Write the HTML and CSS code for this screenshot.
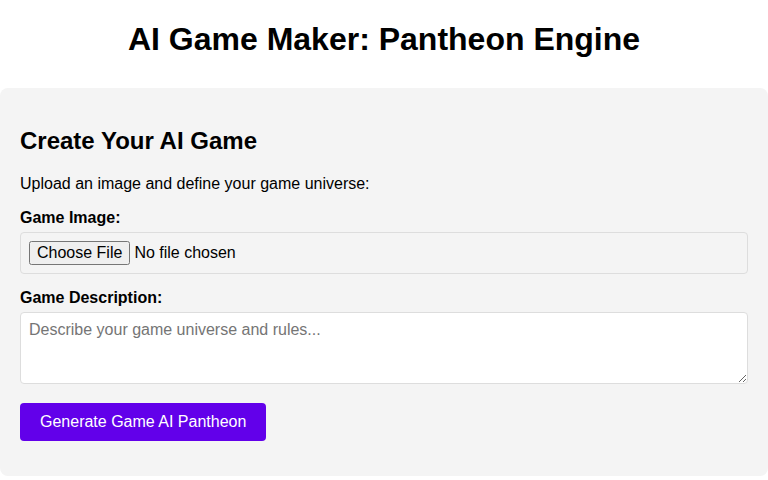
FILE: index.html
```html
<!DOCTYPE html>
<html lang="en">
<head>
<meta charset="utf-8">
<title>AI Game Maker: Pantheon Engine</title>
<link rel="stylesheet" href="styles.css">
</head>
<body>
<h1 class="page-title">AI Game Maker: Pantheon Engine</h1>
<section class="card">
  <h2 class="card-title">Create Your AI Game</h2>
  <p class="intro">Upload an image and define your game universe:</p>
  <label class="field-label" for="game-image">Game Image:</label>
  <input class="file-input" id="game-image" type="file">
  <label class="field-label" for="game-desc">Game Description:</label>
  <textarea class="desc-input" id="game-desc" placeholder="Describe your game universe and rules..."></textarea>
  <button class="generate-btn" type="button">Generate Game AI Pantheon</button>
</section>
</body>
</html>
```
FILE: styles.css
```css
html, body {
  margin: 0;
  padding: 0;
  background: #ffffff;
  font-family: "Liberation Sans", Arial, sans-serif;
  color: #000;
}

.page-title {
  font-size: 32px;
  font-weight: bold;
  text-align: center;
  margin: 21px 0 30px;
}

.card {
  background: #f4f4f4;
  border-radius: 8px;
  padding: 20px;
  display: flex;
  flex-direction: column;
  align-items: flex-start;
  height: 388px;
  box-sizing: border-box;
}

.card-title {
  font-size: 24px;
  font-weight: bold;
  margin: 19px 0 20px;
}

.intro {
  font-size: 16px;
  margin: 0 0 16px;
}

.field-label {
  display: block;
  font-weight: bold;
  font-size: 16px;
  margin-bottom: 5px;
}

.file-input {
  align-self: stretch;
  font-family: inherit;
  font-size: 16px;
  padding: 8px;
  border: 1px solid #dddddd;
  border-radius: 4px;
  background: #f4f4f4;
  margin: 0 0 15px;
  height: 42px;
  box-sizing: border-box;
}

.desc-input {
  align-self: stretch;
  font-family: inherit;
  font-size: 16px;
  padding: 8px;
  border: 1px solid #dddddd;
  border-radius: 4px;
  background: #ffffff;
  height: 72px;
  box-sizing: border-box;
  margin: 0 0 19px;
}

.desc-input::placeholder {
  color: #757575;
}

.generate-btn {
  font-family: inherit;
  font-size: 16px;
  color: #ffffff;
  background: #6200ea;
  border: none;
  border-radius: 4px;
  padding: 10px 20px;
  cursor: pointer;
}
```
